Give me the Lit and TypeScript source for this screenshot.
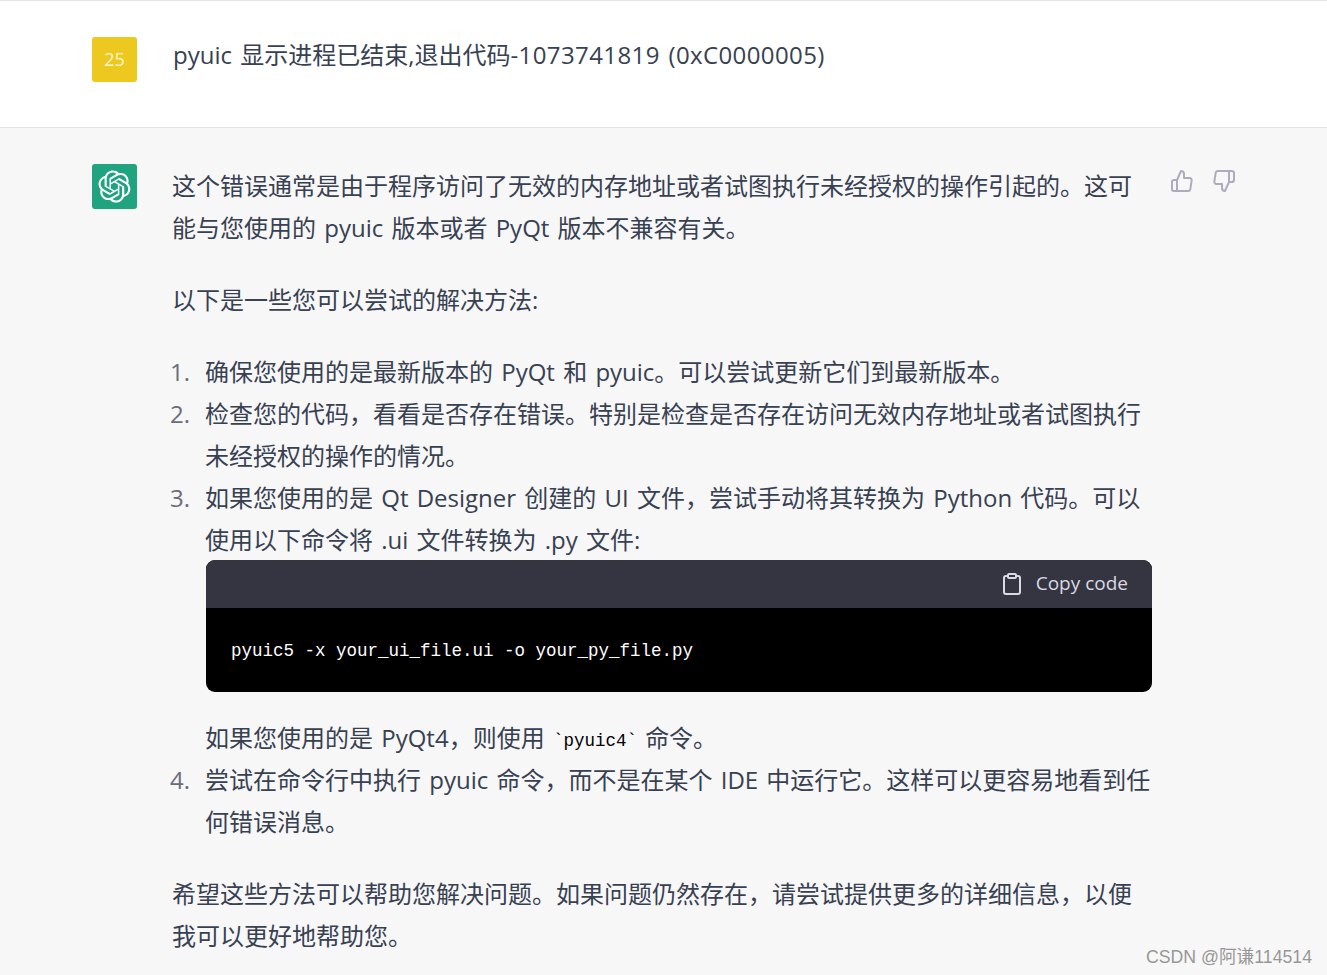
import { LitElement, html, css } from "lit";
import { customElement } from "lit/decorators.js";

@customElement("app-root")
export class AppRoot extends LitElement {
  static styles = css`
    :host {
      display: block;
      position: relative;
      height: 975px;
      overflow: hidden;
      background: #f7f7f8;
      font-family: "Open Sans", "Noto Sans CJK SC", sans-serif;
      font-size: 24px;
      line-height: 42px;
      word-spacing: 2px;
      color: #374151;
    }
    .row {
      display: grid;
      grid-template-columns: 45px 980px auto;
      column-gap: 35px;
      padding-left: 92px;
    }
    .user {
      background: #fff;
      border-top: 1px solid #e5e5e6;
      border-bottom: 1px solid #e2e2e4;
      padding-top: 36px;
      height: 90px;
    }
    .user .text {
      margin-top: -3px;
      margin-left: 1px;
      white-space: nowrap;
    }
    .wide {
      letter-spacing: 0.4px;
    }
    .bot {
      padding-top: 36px;
    }
    .avatar {
      width: 45px;
      height: 45px;
      border-radius: 3px;
      display: flex;
      align-items: center;
      justify-content: center;
      color: #fff;
    }
    .yellow {
      background: #edc81f;
      font-size: 18px;
      line-height: 1;
      color: #fdf6d2;
      padding-bottom: 2px;
      box-sizing: border-box;
    }
    .green {
      background: #20a37f;
    }
    .logo {
      width: 33px;
      height: 33px;
      fill: #fff;
    }
    .content {
      padding-top: 1px;
      white-space: nowrap;
    }
    p {
      margin: 0 0 30px;
    }
    .list {
      margin: 0 0 30px;
    }
    .item {
      display: grid;
      grid-template-columns: 34px 1fr;
    }
    .item > div:last-child {
      margin-left: -1px;
    }
    .num {
      color: #6b6c7b;
      margin-left: -2px;
    }
    .code {
      width: 946px;
      margin: -1px 0 25px 1px;
      border-radius: 9px;
      overflow: hidden;
      background: #000;
    }
    .code-head {
      height: 48px;
      background: #343541;
      display: flex;
      align-items: center;
      justify-content: flex-end;
      gap: 12px;
      padding-right: 24px;
      color: #d9d9e3;
      font-size: 19px;
      line-height: 48px;
      word-spacing: 0;
    }
    .code-head span {
      position: relative;
      top: -1px;
    }
    .clip {
      width: 24px;
      height: 24px;
      fill: none;
      stroke: #d9d9e3;
      stroke-width: 2;
      stroke-linecap: round;
      stroke-linejoin: round;
    }
    .code-body {
      height: 84px;
      padding: 2px 0 0 25px;
      box-sizing: border-box;
      display: flex;
      align-items: center;
      color: #fff;
      font-family: "Liberation Mono", "Noto Sans CJK SC", monospace;
      font-size: 17.5px;
      line-height: 82px;
      word-spacing: 0;
    }
    .mono {
      font-family: "Liberation Mono", monospace;
      font-size: 17.5px;
      line-height: 1;
      color: #000;
      word-spacing: 0;
      vertical-align: 1px;
    }
    .actions {
      display: flex;
      gap: 18px;
      margin-top: 5px;
      margin-left: -17px;
      align-self: start;
    }
    .actions svg {
      width: 24px;
      height: 24px;
      fill: none;
      stroke: #acacbe;
      stroke-width: 2;
      stroke-linecap: round;
      stroke-linejoin: round;
    }
    .mark {
      position: absolute;
      right: 15px;
      top: 946px;
      font-family: "Liberation Sans", "Noto Sans CJK SC", sans-serif;
      font-size: 17.7px;
      line-height: 22px;
      word-spacing: 0;
      color: #979797;
      white-space: nowrap;
    }
  `;

  render() {
    return html`
      <div class="row user">
        <div class="avatar yellow">25</div>
        <div class="text">pyuic 显示进程已结束,退出代码<span class="wide">-1073741819 (0xC0000005)</span></div>
      </div>
      <div class="row bot">
        <div class="avatar green">
          <svg class="logo" viewBox="0 0 41 41">
            <path d="M37.5324 16.8707C37.9808 15.5241 38.1363 14.0974 37.9886 12.6859C37.8409 11.2744 37.3934 9.91076 36.676 8.68622C35.6126 6.83404 33.9882 5.3676 32.0373 4.4985C30.0864 3.62941 27.9098 3.40259 25.8215 3.85078C24.8796 2.7893 23.7219 1.94125 22.4257 1.36341C21.1295 0.785575 19.7249 0.491269 18.3058 0.500197C16.1708 0.495044 14.0893 1.16803 12.3614 2.42214C10.6335 3.67624 9.34853 5.44666 8.6917 7.47815C7.30085 7.76286 5.98686 8.3414 4.8377 9.17505C3.68854 10.0087 2.73073 11.0782 2.02839 12.312C0.956464 14.1591 0.498905 16.2988 0.721698 18.4228C0.944492 20.5467 1.83612 22.5449 3.268 24.1293C2.81966 25.4759 2.66413 26.9026 2.81182 28.3141C2.95951 29.7256 3.40701 31.0892 4.12437 32.3138C5.18791 34.1659 6.8123 35.6322 8.76321 36.5013C10.7141 37.3704 12.8907 37.5973 14.9789 37.1492C15.9208 38.2107 17.0786 39.0587 18.3747 39.6366C19.6709 40.2144 21.0755 40.5087 22.4946 40.4998C24.6307 40.5054 26.7133 39.8321 28.4418 38.5772C30.1704 37.3223 31.4556 35.5506 32.1119 33.5179C33.5027 33.2332 34.8167 32.6547 35.9659 31.821C37.115 30.9874 38.0728 29.9178 38.7752 28.684C39.8458 26.8371 40.3023 24.6979 40.0789 22.5748C39.8556 20.4517 38.9639 18.4544 37.5324 16.8707ZM22.4978 37.8849C20.7443 37.8874 19.0459 37.2733 17.6994 36.1501C17.7601 36.117 17.8666 36.0586 17.936 36.0161L25.9004 31.4156C26.1003 31.3019 26.2663 31.137 26.3813 30.9378C26.4964 30.7386 26.5563 30.5124 26.5549 30.2825V19.0542L29.9213 20.998C29.9389 21.0068 29.9541 21.0198 29.9656 21.0359C29.977 21.052 29.9842 21.0707 29.9867 21.0902V30.3889C29.9842 32.375 29.1946 34.2791 27.7909 35.6841C26.3872 37.0892 24.4838 37.8806 22.4978 37.8849ZM6.39227 31.0064C5.51397 29.4888 5.19742 27.7107 5.49804 25.9832C5.55718 26.0187 5.66048 26.0818 5.73461 26.1244L13.699 30.7248C13.8975 30.8408 14.1233 30.902 14.3532 30.902C14.583 30.902 14.8088 30.8408 15.0073 30.7248L24.731 25.1103V28.9979C24.7321 29.0177 24.7283 29.0376 24.7199 29.0556C24.7115 29.0736 24.6988 29.0893 24.6829 29.1012L16.6317 33.7497C14.9096 34.7416 12.8643 35.0097 10.9447 34.4954C9.02506 33.9811 7.38785 32.7263 6.39227 31.0064ZM4.29707 13.6194C5.17156 12.0998 6.55279 10.9364 8.19885 10.3327C8.19885 10.4013 8.19491 10.5228 8.19491 10.6071V19.808C8.19351 20.0378 8.25334 20.2638 8.36823 20.4629C8.48312 20.6619 8.64893 20.8267 8.84863 20.9404L18.5723 26.5542L15.206 28.4979C15.1894 28.5089 15.1703 28.5155 15.1505 28.5173C15.1307 28.5191 15.1107 28.516 15.0924 28.5082L7.04046 23.8557C5.32135 22.8601 4.06716 21.2235 3.55289 19.3046C3.03862 17.3858 3.30624 15.3413 4.29707 13.6194ZM31.955 20.0556L22.2312 14.4411L25.5976 12.4981C25.6142 12.4872 25.6333 12.4805 25.6531 12.4787C25.6729 12.4769 25.6928 12.4801 25.7111 12.4879L33.7631 17.1364C34.9967 17.849 36.0017 18.8982 36.6606 20.1613C37.3194 21.4244 37.6047 22.849 37.4832 24.2684C37.3617 25.6878 36.8382 27.0432 35.9743 28.1759C35.1103 29.3086 33.9415 30.1717 32.6047 30.6641C32.6047 30.5947 32.6047 30.4733 32.6047 30.3889V21.188C32.6066 20.9586 32.5474 20.7328 32.4332 20.5338C32.319 20.3348 32.154 20.1698 31.955 20.0556ZM35.3055 15.0128C35.2464 14.9765 35.1431 14.9142 35.069 14.8717L27.1045 10.2712C26.906 10.1554 26.6803 10.0943 26.4504 10.0943C26.2206 10.0943 25.9948 10.1554 25.7963 10.2712L16.0726 15.8858V11.9982C16.0715 11.9783 16.0753 11.9585 16.0837 11.9405C16.0921 11.9225 16.1048 11.9068 16.1207 11.8949L24.1719 7.25025C25.4053 6.53903 26.8158 6.19376 28.2383 6.25482C29.6608 6.31589 31.0364 6.78077 32.2044 7.59508C33.3723 8.40939 34.2842 9.53945 34.8334 10.8531C35.3826 12.1667 35.5464 13.6095 35.3055 15.0128ZM14.2424 21.9419L10.8752 19.9981C10.8576 19.9893 10.8423 19.9763 10.8309 19.9602C10.8195 19.9441 10.8122 19.9254 10.8098 19.9058V10.6071C10.8107 9.18295 11.2173 7.78848 11.9819 6.58696C12.7466 5.38544 13.8377 4.42659 15.1275 3.82264C16.4173 3.21869 17.8524 2.99464 19.2649 3.1767C20.6775 3.35876 22.0089 3.93941 23.1034 4.85067C23.0427 4.88379 22.937 4.94215 22.8668 4.98473L14.9024 9.58517C14.7025 9.69878 14.5366 9.86356 14.4215 10.0626C14.3065 10.2616 14.2466 10.4877 14.2479 10.7175L14.2424 21.9419ZM16.071 17.9991L20.4018 15.4978L24.7325 17.9975V22.9985L20.4018 25.4983L16.071 22.9985V17.9991Z"></path>
          </svg>
        </div>
        <div class="content">
          <p>这个错误通常是由于程序访问了无效的内存地址或者试图执行未经授权的操作引起的。这可<br />能与您使用的 pyuic 版本或者 PyQt 版本不兼容有关。</p>
          <p>以下是一些您可以尝试的解决方法:</p>
          <div class="list">
            <div class="item">
              <div class="num">1.</div>
              <div>确保您使用的是最新版本的 PyQt 和 pyuic。可以尝试更新它们到最新版本。</div>
            </div>
            <div class="item">
              <div class="num">2.</div>
              <div>检查您的代码，看看是否存在错误。特别是检查是否存在访问无效内存地址或者试图执行<br />未经授权的操作的情况。</div>
            </div>
            <div class="item">
              <div class="num">3.</div>
              <div>
                如果您使用的是 Qt Designer 创建的 UI 文件，尝试手动将其转换为 Python 代码。可以<br />使用以下命令将 .ui 文件转换为 .py 文件:
                <div class="code">
                  <div class="code-head">
                    <svg class="clip" viewBox="0 0 24 24">
                      <path d="M16 4h2a2 2 0 0 1 2 2v14a2 2 0 0 1-2 2H6a2 2 0 0 1-2-2V6a2 2 0 0 1 2-2h2"></path>
                      <rect x="8" y="2" width="8" height="4" rx="1" ry="1"></rect>
                    </svg>
                    <span>Copy code</span>
                  </div>
                  <div class="code-body">pyuic5 -x your_ui_file.ui -o your_py_file.py</div>
                </div>
                如果您使用的是 PyQt4，则使用 <span class="mono">\`pyuic4\`</span> 命令。
              </div>
            </div>
            <div class="item">
              <div class="num">4.</div>
              <div>尝试在命令行中执行 pyuic 命令，而不是在某个 IDE 中运行它。这样可以更容易地看到任<br />何错误消息。</div>
            </div>
          </div>
          <p>希望这些方法可以帮助您解决问题。如果问题仍然存在，请尝试提供更多的详细信息，以便<br />我可以更好地帮助您。</p>
        </div>
        <div class="actions">
          <svg viewBox="0 0 24 24"><path d="M14 9V5a3 3 0 0 0-3-3l-4 9v11h11.28a2 2 0 0 0 2-1.7l1.38-9a2 2 0 0 0-2-2.3zM7 22H4a2 2 0 0 1-2-2v-7a2 2 0 0 1 2-2h3"></path></svg>
          <svg viewBox="0 0 24 24"><path d="M10 15v4a3 3 0 0 0 3 3l4-9V2H5.72a2 2 0 0 0-2 1.7l-1.38 9a2 2 0 0 0 2 2.3zm7-13h2.67A2.31 2.31 0 0 1 22 4v7a2.31 2.31 0 0 1-2.33 2H17"></path></svg>
        </div>
      </div>
      <div class="mark">CSDN @阿谦114514</div>
    `;
  }
}
